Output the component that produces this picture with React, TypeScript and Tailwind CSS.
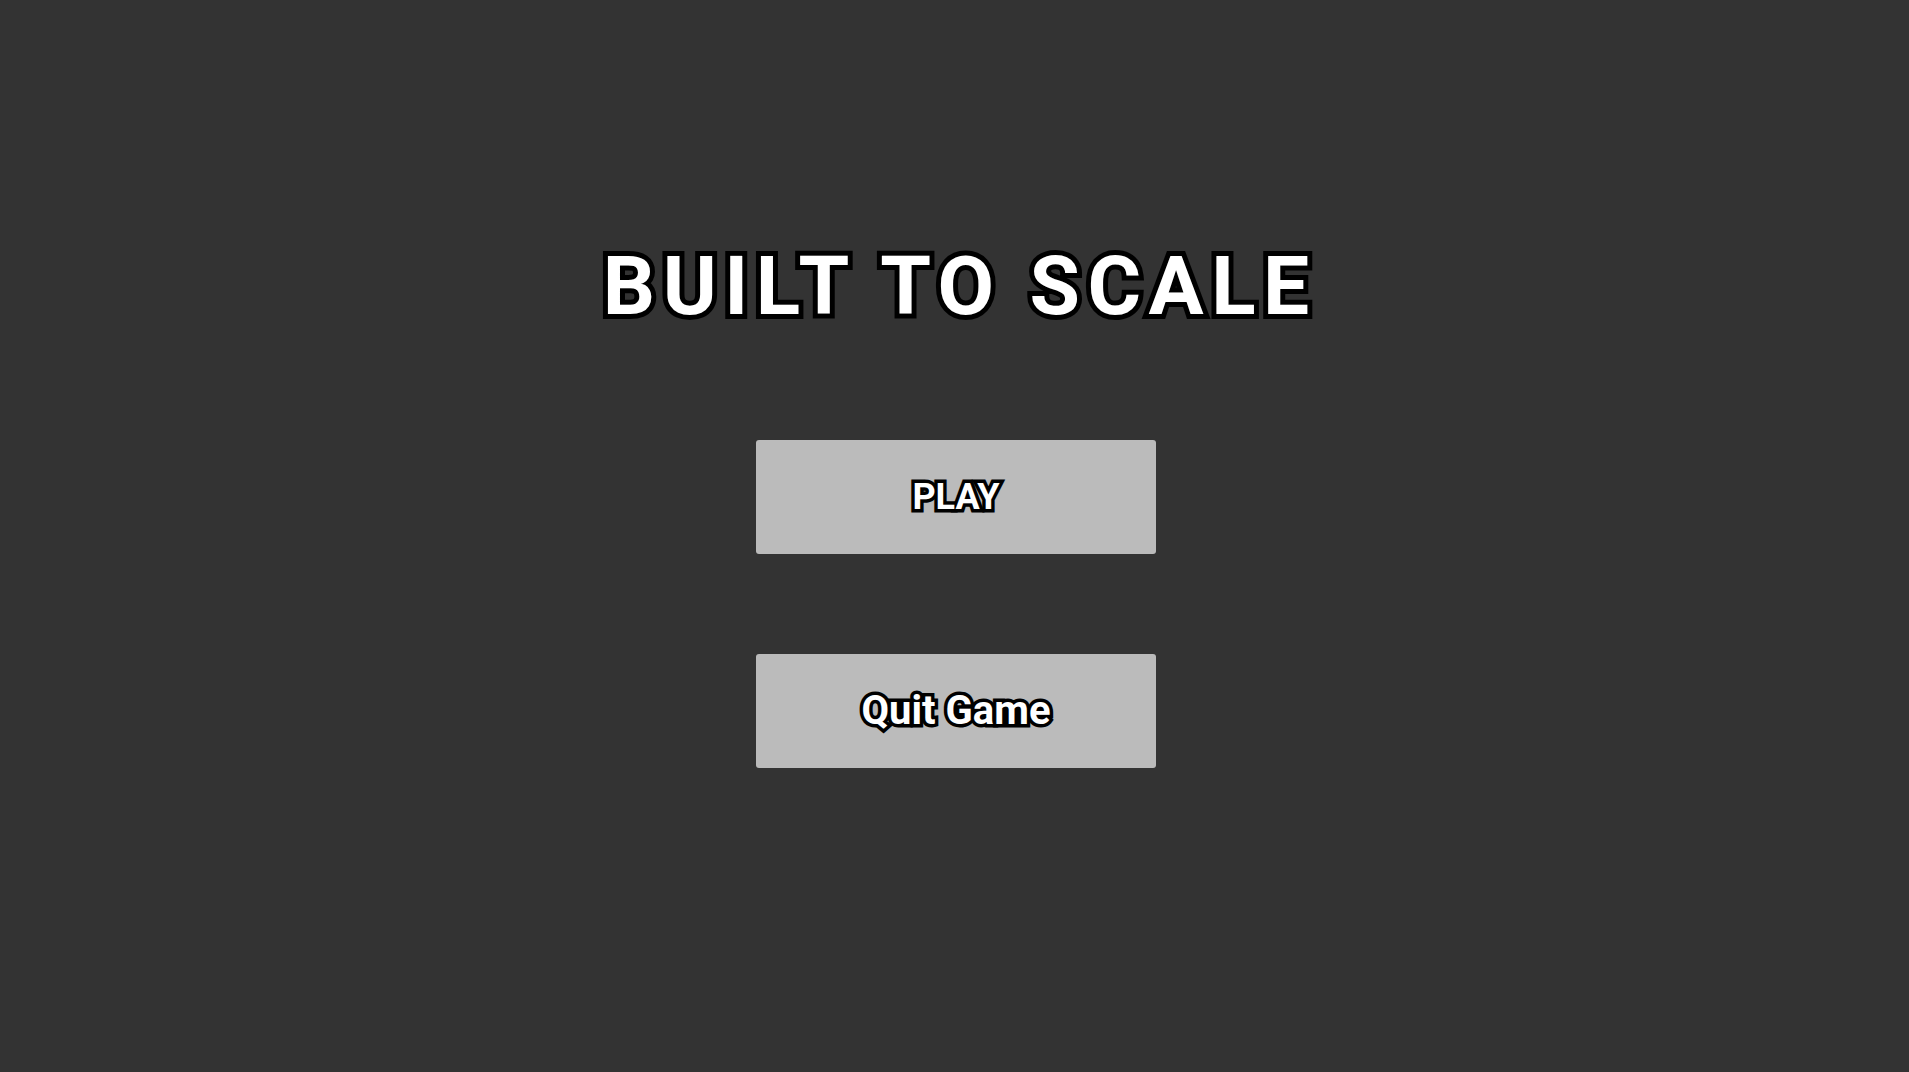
import React from 'react';

const outlined = '[paint-order:stroke_fill] text-white leading-none font-bold';

const MenuButton: React.FC<{ label: string; className?: string; textClass?: string }> = ({
    label,
    className,
    textClass,
}) => (
    <button
        type="button"
        className={`flex h-[114px] w-[400px] items-center justify-center rounded-[3px] bg-[#bbbbbb] ${className ?? ''}`}
    >
        <span className={`${outlined} [-webkit-text-stroke:7px_#000] ${textClass ?? ''}`}>{label}</span>
    </button>
);

export default function App() {
    return (
        <div className="flex h-screen w-full flex-col items-center bg-[#333333] pl-[3px] font-['Roboto',sans-serif]">
            <h1
                className={`${outlined} mt-[245px] pl-[7.5px] text-[82px] tracking-[7.5px] [-webkit-text-stroke:10px_#000]`}
            >
                BUILT TO SCALE
            </h1>
            <MenuButton label="PLAY" className="mt-[113px]" textClass="text-[36px]" />
            <MenuButton label="Quit Game" className="mt-[100px]" textClass="text-[40px]" />
        </div>
    );
}
